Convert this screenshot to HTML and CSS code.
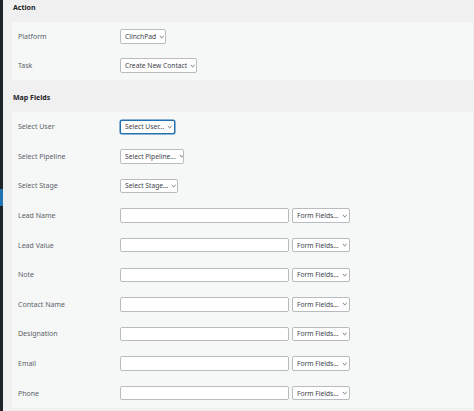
FILE: index.html
```html
<!DOCTYPE html>
<html lang="en">
<head>
  <meta charset="UTF-8" />
  <title>Action - Map Fields</title>
  <link rel="stylesheet" href="styles.css">
</head>
<body>
  <div class="admin-bar"><span class="current-mark"></span></div>
  <div class="content">
    <div class="section-title first">Action</div>
    <div class="panel panel-action">
      <div class="row">
        <div class="label">Platform</div>
        <div class="field">
          <div class="select w-platform"><span>ClinchPad</span><svg viewBox="0 0 10 6"><path d="M1.5 1.2 L5 4.6 L8.5 1.2"/></svg></div>
        </div>
      </div>
      <div class="row">
        <div class="label">Task</div>
        <div class="field">
          <div class="select w-task"><span>Create New Contact</span><svg viewBox="0 0 10 6"><path d="M1.5 1.2 L5 4.6 L8.5 1.2"/></svg></div>
        </div>
      </div>
    </div>

    <div class="section-title">Map Fields</div>
    <div class="panel panel-map">
      <div class="row">
        <div class="label">Select User</div>
        <div class="field">
          <div class="select w-user focused"><span>Select User...</span><svg viewBox="0 0 10 6"><path d="M1.5 1.2 L5 4.6 L8.5 1.2"/></svg></div>
        </div>
      </div>
      <div class="row">
        <div class="label">Select Pipeline</div>
        <div class="field">
          <div class="select w-pipeline"><span>Select Pipeline...</span><svg viewBox="0 0 10 6"><path d="M1.5 1.2 L5 4.6 L8.5 1.2"/></svg></div>
        </div>
      </div>
      <div class="row">
        <div class="label">Select Stage</div>
        <div class="field">
          <div class="select w-stage"><span>Select Stage...</span><svg viewBox="0 0 10 6"><path d="M1.5 1.2 L5 4.6 L8.5 1.2"/></svg></div>
        </div>
      </div>
      <div class="row">
        <div class="label">Lead Name</div>
        <div class="field">
          <input class="text-input" type="text">
          <div class="select w-form"><span>Form Fields...</span><svg viewBox="0 0 10 6"><path d="M1.5 1.2 L5 4.6 L8.5 1.2"/></svg></div>
        </div>
      </div>
      <div class="row">
        <div class="label">Lead Value</div>
        <div class="field">
          <input class="text-input" type="text">
          <div class="select w-form"><span>Form Fields...</span><svg viewBox="0 0 10 6"><path d="M1.5 1.2 L5 4.6 L8.5 1.2"/></svg></div>
        </div>
      </div>
      <div class="row">
        <div class="label">Note</div>
        <div class="field">
          <input class="text-input" type="text">
          <div class="select w-form"><span>Form Fields...</span><svg viewBox="0 0 10 6"><path d="M1.5 1.2 L5 4.6 L8.5 1.2"/></svg></div>
        </div>
      </div>
      <div class="row">
        <div class="label">Contact Name</div>
        <div class="field">
          <input class="text-input" type="text">
          <div class="select w-form"><span>Form Fields...</span><svg viewBox="0 0 10 6"><path d="M1.5 1.2 L5 4.6 L8.5 1.2"/></svg></div>
        </div>
      </div>
      <div class="row">
        <div class="label">Designation</div>
        <div class="field">
          <input class="text-input" type="text">
          <div class="select w-form"><span>Form Fields...</span><svg viewBox="0 0 10 6"><path d="M1.5 1.2 L5 4.6 L8.5 1.2"/></svg></div>
        </div>
      </div>
      <div class="row">
        <div class="label">Email</div>
        <div class="field">
          <input class="text-input" type="text">
          <div class="select w-form"><span>Form Fields...</span><svg viewBox="0 0 10 6"><path d="M1.5 1.2 L5 4.6 L8.5 1.2"/></svg></div>
        </div>
      </div>
      <div class="row">
        <div class="label">Phone</div>
        <div class="field">
          <input class="text-input" type="text">
          <div class="select w-form"><span>Form Fields...</span><svg viewBox="0 0 10 6"><path d="M1.5 1.2 L5 4.6 L8.5 1.2"/></svg></div>
        </div>
      </div>
    </div>
  </div>
</body>
</html>
```

FILE: styles.css
```css
html, body {
  margin: 0;
  padding: 0;
  height: 100%;
}
body {
  display: flex;
  background: #f0f0f1;
  font-family: "Noto Sans", "Open Sans", sans-serif;
  color: #50575e;
  overflow: hidden;
}
.admin-bar {
  width: 3px;
  flex-shrink: 0;
  background: #1d2327;
  position: relative;
}
.current-mark {
  position: absolute;
  top: 189px;
  left: 0;
  width: 3px;
  height: 17px;
  background: #2271b1;
}
.content {
  flex: 1;
  padding: 0 1px 0 9px;
}
.section-title {
  padding: 13px 0 9px 1px;
  font-size: 7px;
  line-height: 10px;
  font-weight: 700;
  color: #1d2327;
}
.section-title.first {
  padding-top: 3px;
}
.panel {
  background: #f6f7f7;
}
.panel-action .row {
  height: 29px;
}
.panel-map .row {
  height: 29.6px;
}
.row {
  display: flex;
  align-items: center;
}
.label {
  width: 102px;
  padding-left: 6px;
  font-size: 7px;
  color: #5c6369;
}
.field {
  display: flex;
  align-items: center;
  gap: 3px;
}
.select {
  box-sizing: border-box;
  height: 14.5px;
  display: inline-flex;
  align-items: center;
  justify-content: space-between;
  padding: 0 4px 0 4px;
  background: #fff;
  border: 1px solid #b9bcbf;
  border-radius: 2px;
  font-size: 6.7px;
  color: #3c434a;
  white-space: nowrap;
  overflow: hidden;
}
.select svg {
  width: 5.5px;
  height: 4px;
  flex-shrink: 0;
  margin-left: 3px;
}
.select svg path {
  fill: none;
  stroke: #50575e;
  stroke-width: 1.5;
}
.select.focused {
  border-color: #2271b1;
  box-shadow: 0 0 0 0.5px #2271b1;
}
.w-platform { width: 46px; }
.w-task { width: 77px; }
.w-user { width: 55px; }
.w-pipeline { width: 64px; }
.w-stage { width: 58px; }
.w-form { width: 58px; }
.text-input {
  box-sizing: border-box;
  width: 169px;
  height: 14.5px;
  margin: 0;
  padding: 0 4px;
  background: #fff;
  border: 1px solid #b9bcbf;
  border-radius: 2px;
  font-size: 7px;
}
```
